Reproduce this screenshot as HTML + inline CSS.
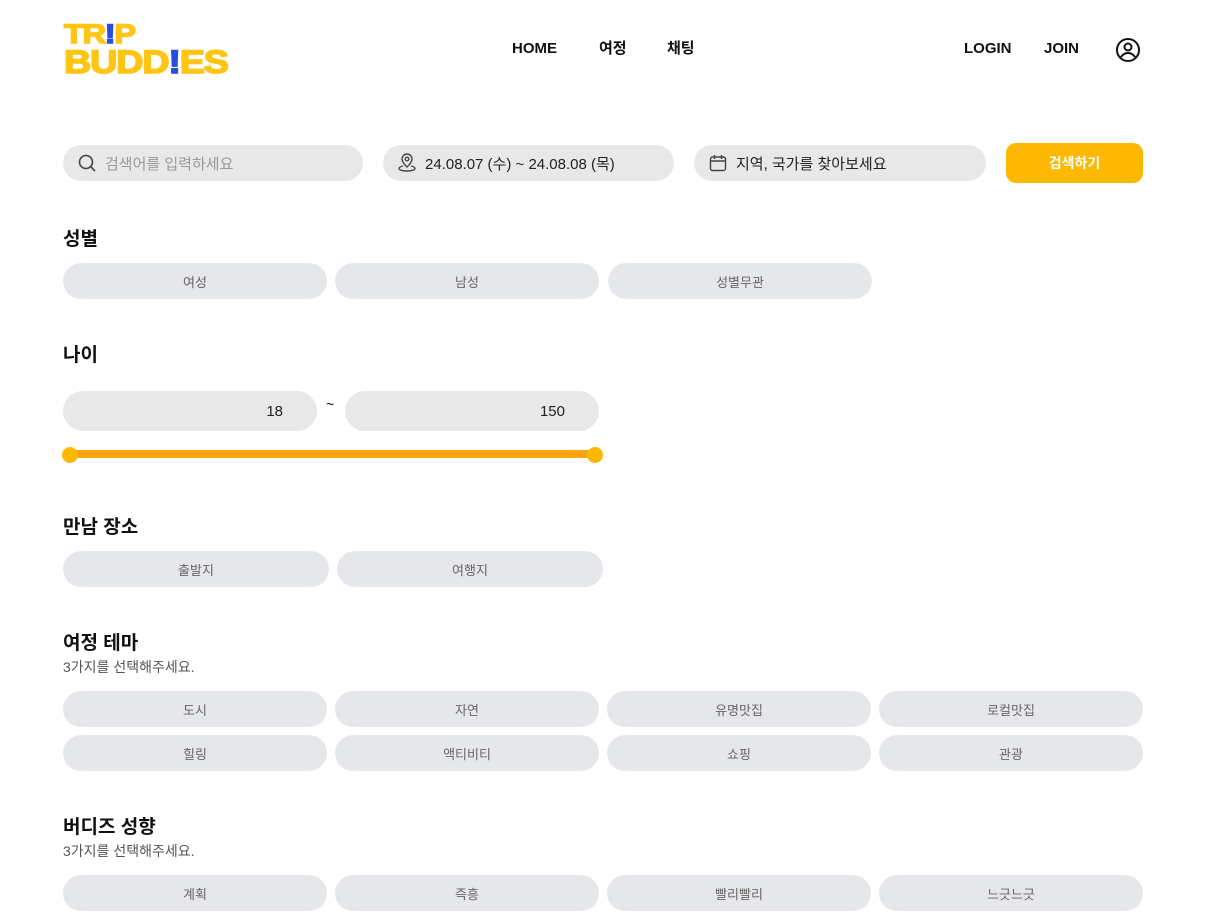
<!DOCTYPE html>
<html><head><meta charset="utf-8"><style>
*{margin:0;padding:0;box-sizing:border-box}
body{width:1223px;height:918px;background:#fff;position:relative;overflow:hidden;font-family:"Liberation Sans","Noto Sans CJK KR",sans-serif;color:#111}
.a{position:absolute}
.logo{font-weight:900;color:#ffc515;line-height:1;letter-spacing:-1px;transform-origin:0 0;-webkit-text-stroke:1.5px #ffc515;white-space:nowrap}
.logo b{color:#2a4de0;-webkit-text-stroke:1.5px #2a4de0}
.nav{font-size:15px;font-weight:700;top:39px;line-height:20px;height:20px}
.field{background:#e8e8e8;border-radius:18px;height:36px;top:145px;display:flex;align-items:center;padding-left:14px;font-size:15px;color:#222}
.field svg{margin-right:8px}
.btn{left:1006px;top:143px;width:137px;height:40px;background:#ffb800;border-radius:10px;color:#fff;font-weight:700;font-size:14px;display:flex;align-items:center;justify-content:center}
h3{position:absolute;font-size:19px;font-weight:600;left:63px;line-height:24px}
.sub{position:absolute;left:63px;font-size:14px;color:#555}
.chip{position:absolute;width:264px;height:36px;border-radius:18px;background:#e6e7ea;color:#666;font-size:13px;display:flex;align-items:center;justify-content:center}
.num{position:absolute;top:391px;height:40px;border-radius:20px;background:#e8e8e8;font-size:15px;display:flex;align-items:center;justify-content:flex-end;color:#222}
</style></head><body>
<div class="a logo" style="left:64px;top:21px;font-size:27px;transform:scaleX(1.2)">TR<b>!</b>P</div>
<div class="a logo" style="left:64px;top:46px;font-size:32px;transform:scaleX(1.18)">BUDD<b>!</b>ES</div>
<div class="a nav" style="left:512px">HOME</div>
<div class="a nav" style="left:599px">여정</div>
<div class="a nav" style="left:667px">채팅</div>
<div class="a nav" style="left:964px">LOGIN</div>
<div class="a nav" style="left:1044px">JOIN</div>
<svg class="a" style="left:1115px;top:37px" width="26" height="26" viewBox="0 0 26 26" fill="none" stroke="#111" stroke-width="2"><circle cx="13" cy="13" r="11"/><circle cx="13" cy="10" r="3.5"/><path d="M6 20c2-3 4.5-4 7-4s5 1 7 4"/></svg>

<div class="a field" style="left:63px;width:300px;color:#999"><svg width="20" height="20" viewBox="0 0 20 20" fill="none" stroke="#444" stroke-width="1.6"><circle cx="9" cy="9" r="6.5"/><path d="M14 14l4 4"/></svg>검색어를 입력하세요</div>
<div class="a field" style="left:383px;width:291px"><svg width="20" height="20" viewBox="0 0 20 20" fill="none" stroke="#444" stroke-width="1.4"><path d="M10 14s-5-4.5-5-8a5 5 0 0110 0c0 3.5-5 8-5 8z"/><circle cx="10" cy="6" r="1.8"/><path d="M6 13c-2.5.6-4 1.5-4 2.5 0 1.5 3.6 2.5 8 2.5s8-1 8-2.5c0-1-1.5-1.9-4-2.5"/></svg>24.08.07 (수) ~ 24.08.08 (목)</div>
<div class="a field" style="left:694px;width:292px"><svg width="20" height="20" viewBox="0 0 20 20" fill="none" stroke="#444" stroke-width="1.4"><rect x="2.5" y="4" width="15" height="13.5" rx="2"/><path d="M2.5 8h15M6.5 2v4M13.5 2v4"/></svg>지역, 국가를 찾아보세요</div>
<div class="a btn">검색하기</div>

<h3 style="top:228px">성별</h3>
<div class="chip" style="left:63px;top:263px">여성</div>
<div class="chip" style="left:335px;top:263px">남성</div>
<div class="chip" style="left:608px;top:263px">성별무관</div>

<h3 style="top:344px">나이</h3>
<div class="num" style="left:63px;width:254px;padding-right:34px">18</div>
<div class="a" style="left:326px;top:396px;font-size:14px">~</div>
<div class="num" style="left:345px;width:254px;padding-right:34px">150</div>
<div class="a" style="left:70px;top:450px;width:525px;height:8px;background:#ffa514"></div>
<div class="a" style="left:62px;top:447px;width:16px;height:16px;border-radius:50%;background:#ffb800"></div>
<div class="a" style="left:587px;top:447px;width:16px;height:16px;border-radius:50%;background:#ffb800"></div>

<h3 style="top:516px">만남 장소</h3>
<div class="chip" style="left:63px;top:551px;width:266px">출발지</div>
<div class="chip" style="left:337px;top:551px;width:266px">여행지</div>

<h3 style="top:632px">여정 테마</h3>
<div class="sub" style="top:657px">3가지를 선택해주세요.</div>
<div class="chip" style="left:63px;top:691px">도시</div>
<div class="chip" style="left:335px;top:691px">자연</div>
<div class="chip" style="left:607px;top:691px">유명맛집</div>
<div class="chip" style="left:879px;top:691px">로컬맛집</div>
<div class="chip" style="left:63px;top:735px">힐링</div>
<div class="chip" style="left:335px;top:735px">액티비티</div>
<div class="chip" style="left:607px;top:735px">쇼핑</div>
<div class="chip" style="left:879px;top:735px">관광</div>

<h3 style="top:816px">버디즈 성향</h3>
<div class="sub" style="top:841px">3가지를 선택해주세요.</div>
<div class="chip" style="left:63px;top:875px">계획</div>
<div class="chip" style="left:335px;top:875px">즉흥</div>
<div class="chip" style="left:607px;top:875px">빨리빨리</div>
<div class="chip" style="left:879px;top:875px">느긋느긋</div>
</body></html>
